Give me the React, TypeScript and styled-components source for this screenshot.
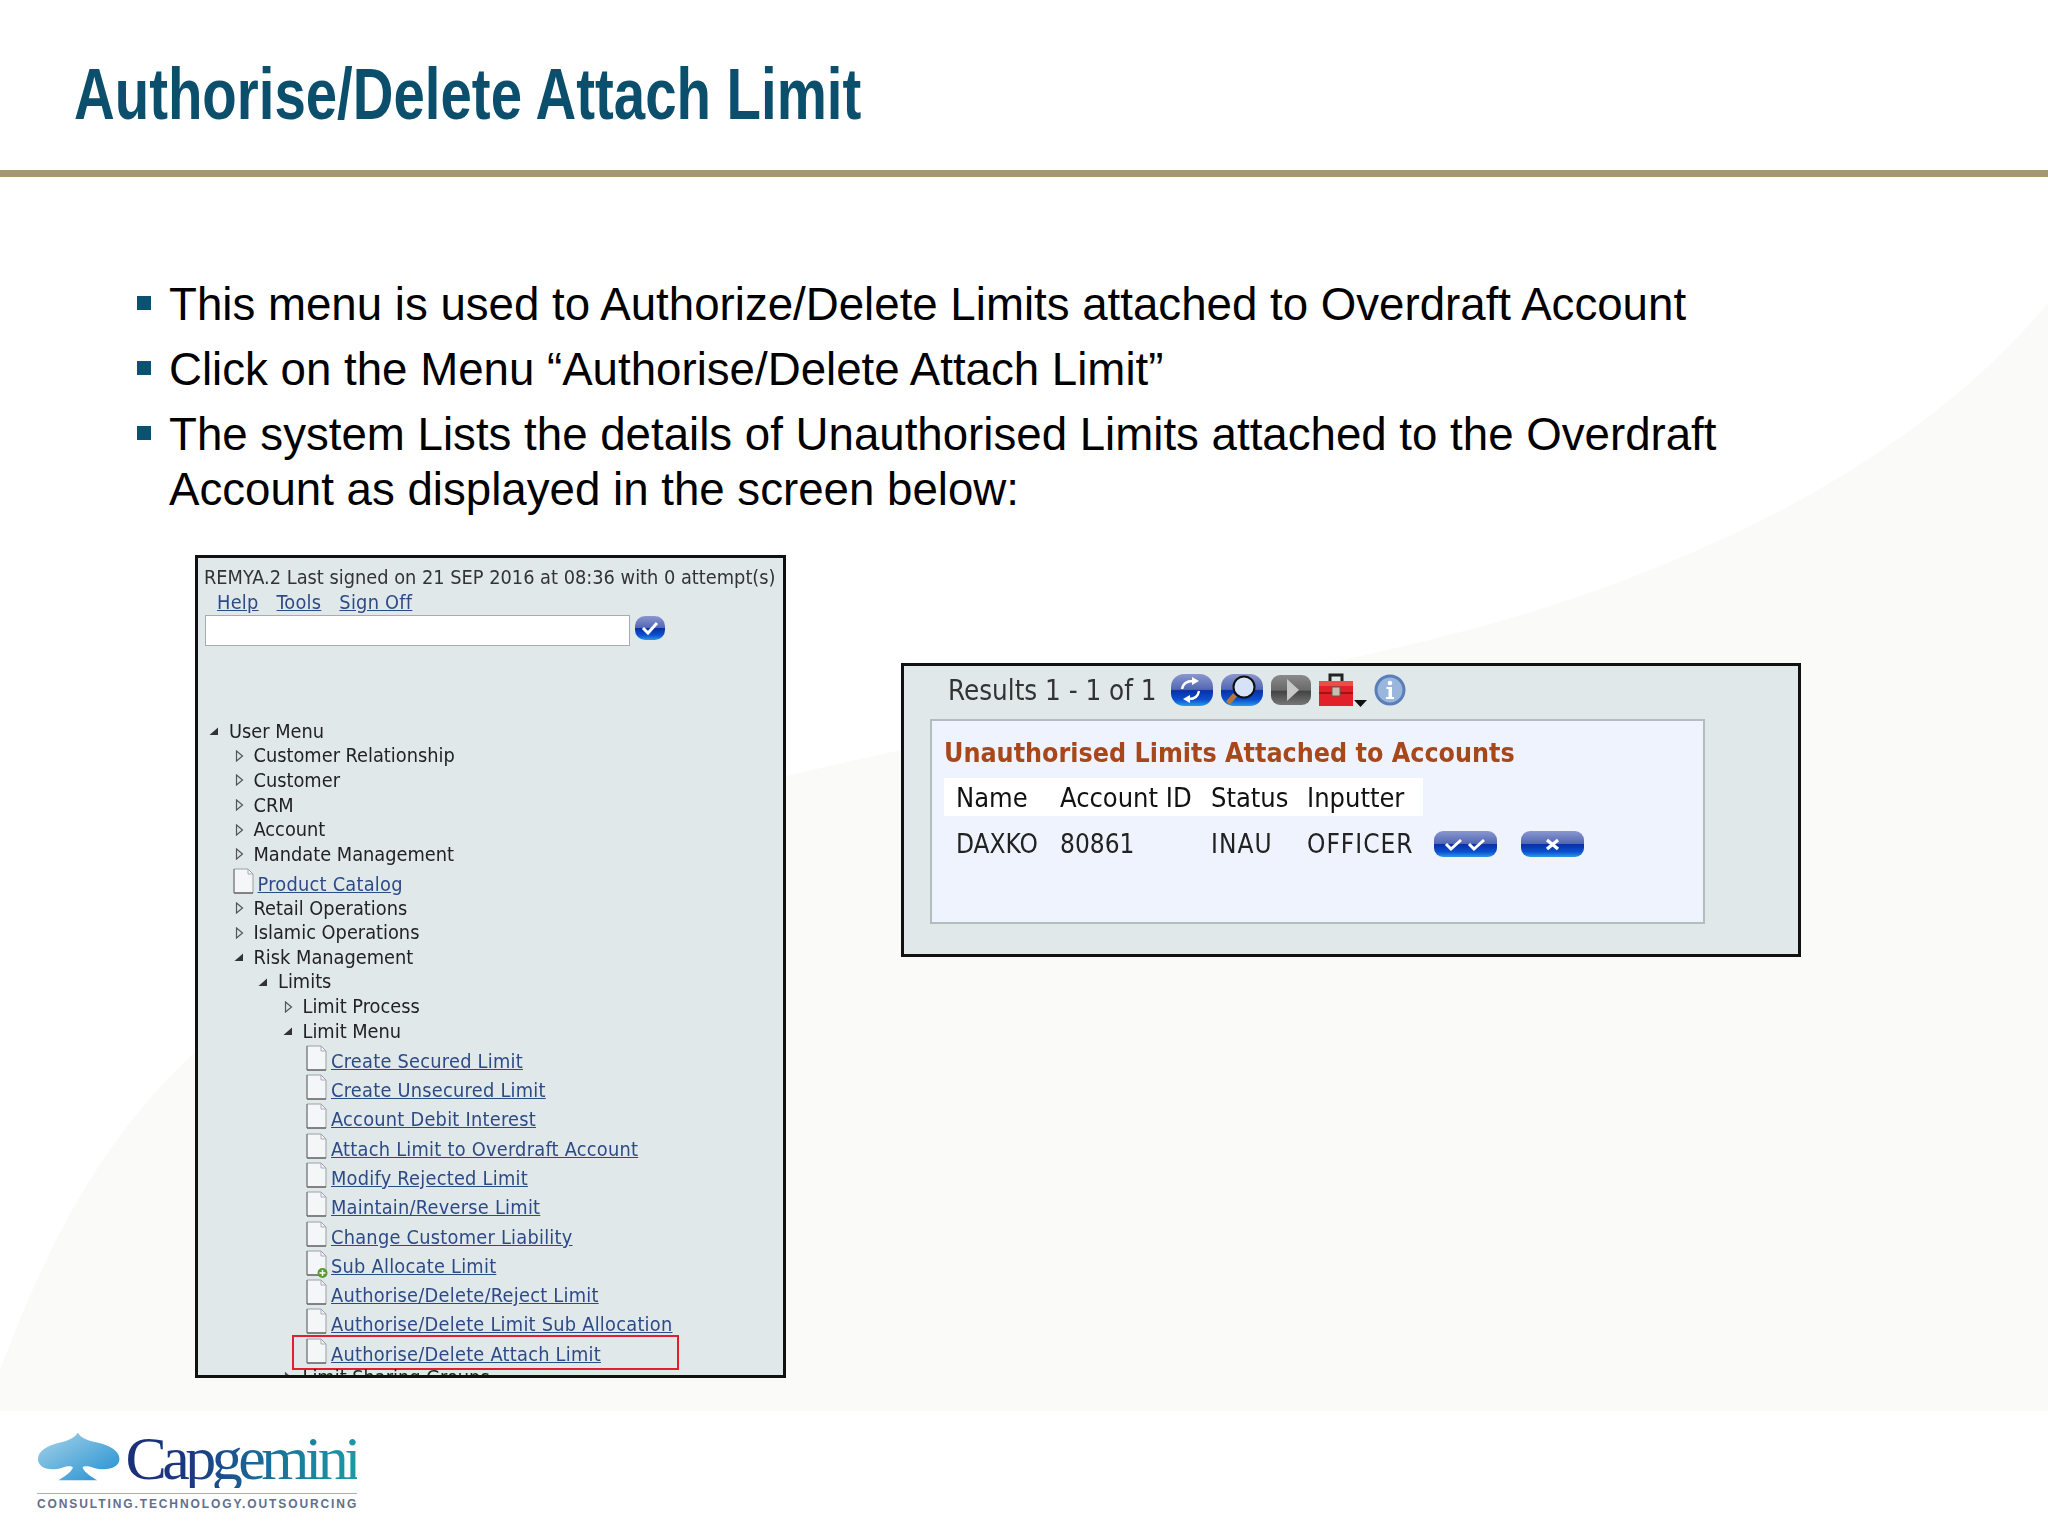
import React from 'react';
import styled, {createGlobalStyle} from 'styled-components';

const GlobalStyle = createGlobalStyle`
    html, body {
        margin: 0;
        padding: 0;
        background: #fff;
    }
`

const menuFont = `"DejaVu Sans", "Noto Sans", sans-serif`

const Arrow = ({open}: { open?: boolean }) => (
    <svg width="12" height="12" viewBox="0 0 12 12">
        {open
            ? <path d="M10 2.5 L10 10 L1.5 10 Z" fill="#333"/>
            : <path d="M3.5 1 L9.5 6 L3.5 11 Z" fill="#dfe5e7" stroke="#555" strokeWidth="1.2"/>}
    </svg>
)

const PageIcon = ({badge}: { badge?: boolean }) => (
    <svg width="22" height="28" viewBox="0 0 22 28">
        <path d="M1 1 H15 L20 6 V25 H1 Z" fill="#f4f6f7" stroke="#9aa0a4" strokeWidth="1"/>
        <path d="M1 25 H20" stroke="#555" strokeWidth="1.2"/>
        <path d="M1 1 V25" stroke="#777" strokeWidth="1"/>
        <path d="M15 1 V6 H20" fill="none" stroke="#aab" strokeWidth="1"/>
        {badge && <>
            <circle cx="16.500" cy="23" r="5" fill="#5a9a2e"/>
            <path d="M16.500 20 V26 M13.500 23 H19.500" stroke="#fff" strokeWidth="1.5"/>
        </>}
    </svg>
)

const BlueDefs = () => (
    <defs>
        <linearGradient id="glossBlue" x1="0" y1="0" x2="0" y2="1">
            <stop offset="0" stopColor="#8a97cf"/>
            <stop offset="0.48" stopColor="#5368b4"/>
            <stop offset="0.52" stopColor="#0a2fa8"/>
            <stop offset="0.8" stopColor="#0b50cf"/>
            <stop offset="1" stopColor="#2a9ae8"/>
        </linearGradient>
        <linearGradient id="glossGrey" x1="0" y1="0" x2="0" y2="1">
            <stop offset="0" stopColor="#8a8a8a"/>
            <stop offset="0.5" stopColor="#6a6a6a"/>
            <stop offset="0.55" stopColor="#444"/>
            <stop offset="1" stopColor="#777"/>
        </linearGradient>
    </defs>
)

const GoIcon = () => (
    <svg width="32" height="26" viewBox="0 0 32 26">
        <rect x="1" y="1" width="30" height="24" rx="10" fill="url(#glossBlue)"/>
        <path d="M9 13 L14 18 L23 8" fill="none" stroke="#fff" strokeWidth="3"/>
    </svg>
)

const RefreshIcon = () => (
    <svg width="44" height="34" viewBox="0 0 44 34">
        <rect x="1" y="1" width="42" height="32" rx="13" fill="url(#glossBlue)"/>
        <path d="M12 16 C13 10 18 8 23 8 M29 18 C28 24 24 26 19 26" fill="none" stroke="#fff" strokeWidth="2.4"/>
        <path d="M22 4 L29 8 L22 12 Z M20 22 L13 26 L20 30 Z" fill="#fff"/>
    </svg>
)

const SearchIcon = () => (
    <svg width="44" height="34" viewBox="0 0 44 34">
        <rect x="1" y="1" width="42" height="32" rx="13" fill="url(#glossBlue)"/>
        <circle cx="24" cy="14" r="10.5" fill="#d5e2f7" stroke="#111" strokeWidth="2"/>
        <path d="M15 22 L8 30" stroke="#b8763a" strokeWidth="5"/>
    </svg>
)

const PlayIcon = () => (
    <svg width="42" height="32" viewBox="0 0 42 32">
        <rect x="1" y="1" width="40" height="30" rx="9" fill="url(#glossGrey)"/>
        <path d="M17 5 L29 16 L17 27 Z" fill="#c6c8c8"/>
    </svg>
)

const ToolboxIcon = () => (
    <svg width="50" height="34" viewBox="0 0 50 34">
        <path d="M12 8 V2 H24 V8" fill="none" stroke="#222" strokeWidth="3"/>
        <rect x="1" y="8" width="34" height="25" fill="#e2202a"/>
        <rect x="1" y="8" width="34" height="5" fill="#f04a4a"/>
        <path d="M1 20 H35" stroke="#8a1010" strokeWidth="1.4"/>
        <rect x="14" y="14" width="8" height="9" fill="#c7bdb0" stroke="#6a5a50"/>
        <path d="M36 27 H49 L42.500 34 Z" fill="#111"/>
    </svg>
)

const InfoIcon = () => (
    <svg width="32" height="32" viewBox="0 0 32 32">
        <circle cx="16" cy="16" r="14" fill="#9ab6dc" stroke="#5a7fb8" strokeWidth="3"/>
        <circle cx="16" cy="9" r="2.300" fill="#fff"/>
        <path d="M12.500 13 H18 V23 H20 V25 H12 V23 H14.500 V15 H12.500 Z" fill="#fff"/>
    </svg>
)

const ApproveIcon = () => (
    <svg width="65" height="28" viewBox="0 0 65 28">
        <rect x="1" y="1" width="63" height="26" rx="9" fill="url(#glossBlue)"/>
        <path d="M13 14 L18 19 L28 10 M36 14 L41 19 L51 10" fill="none" stroke="#fff" strokeWidth="3"/>
    </svg>
)

const RejectIcon = () => (
    <svg width="65" height="28" viewBox="0 0 65 28">
        <rect x="1" y="1" width="63" height="26" rx="9" fill="url(#glossBlue)"/>
        <path d="M27 10 L38 19 M38 10 L27 19" fill="none" stroke="#fff" strokeWidth="3.400"/>
    </svg>
)

const menuRows: {label: string, depth: number, kind: 'open' | 'closed' | 'leaf', badge?: boolean, marked?: boolean}[] = [
    {label: 'User Menu', depth: 0, kind: 'open'},
    {label: 'Customer Relationship', depth: 1, kind: 'closed'},
    {label: 'Customer', depth: 1, kind: 'closed'},
    {label: 'CRM', depth: 1, kind: 'closed'},
    {label: 'Account', depth: 1, kind: 'closed'},
    {label: 'Mandate Management', depth: 1, kind: 'closed'},
    {label: 'Product Catalog', depth: 1, kind: 'leaf'},
    {label: 'Retail Operations', depth: 1, kind: 'closed'},
    {label: 'Islamic Operations', depth: 1, kind: 'closed'},
    {label: 'Risk Management', depth: 1, kind: 'open'},
    {label: 'Limits', depth: 2, kind: 'open'},
    {label: 'Limit Process', depth: 3, kind: 'closed'},
    {label: 'Limit Menu', depth: 3, kind: 'open'},
    {label: 'Create Secured Limit', depth: 4, kind: 'leaf'},
    {label: 'Create Unsecured Limit', depth: 4, kind: 'leaf'},
    {label: 'Account Debit Interest', depth: 4, kind: 'leaf'},
    {label: 'Attach Limit to Overdraft Account', depth: 4, kind: 'leaf'},
    {label: 'Modify Rejected Limit', depth: 4, kind: 'leaf'},
    {label: 'Maintain/Reverse Limit', depth: 4, kind: 'leaf'},
    {label: 'Change Customer Liability', depth: 4, kind: 'leaf'},
    {label: 'Sub Allocate Limit', depth: 4, kind: 'leaf', badge: true},
    {label: 'Authorise/Delete/Reject Limit', depth: 4, kind: 'leaf'},
    {label: 'Authorise/Delete Limit Sub Allocation', depth: 4, kind: 'leaf'},
    {label: 'Authorise/Delete Attach Limit', depth: 4, kind: 'leaf', marked: true},
    {label: 'Limit Sharing Groups', depth: 3, kind: 'closed'},
]

export default function App() {
    return (
        <Page>
            <GlobalStyle/>
            <Swoosh viewBox="0 0 2048 1536" aria-hidden="true">
                <path d="M0 1370 C60 1210 130 1090 260 1000 C420 890 600 820 786 776 C1000 725 1220 690 1400 647 C1650 590 1900 480 2048 303 V1536 H0 Z"
                      fill="#fafaf8"/>
            </Swoosh>
            <Header>
                <Title>Authorise/Delete Attach Limit</Title>
            </Header>
            <Rule/>
            <Bullets>
                <Bullet>This menu is used to Authorize/Delete Limits attached to Overdraft Account</Bullet>
                <Bullet>Click on the Menu “Authorise/Delete Attach Limit”</Bullet>
                <Bullet>The system Lists the details of Unauthorised Limits attached to the Overdraft Account as displayed in the screen below:</Bullet>
            </Bullets>
            <Figures>
                <MenuShot>
                    <svg width="0" height="0" style={{position: 'absolute'}}><BlueDefs/></svg>
                    <SignedLine>REMYA.2 Last signed on 21 SEP 2016 at 08:36 with 0 attempt(s)</SignedLine>
                    <TopLinks>
                        <MenuLink>Help</MenuLink>
                        <MenuLink>Tools</MenuLink>
                        <MenuLink>Sign Off</MenuLink>
                    </TopLinks>
                    <CommandRow>
                        <CommandInput/>
                        <GoIcon/>
                    </CommandRow>
                    <Tree>
                        {menuRows.map(row => (
                            <TreeRow key={row.label} $depth={row.depth} $leaf={row.kind === 'leaf'} $marked={row.marked}>
                                {row.kind === 'leaf'
                                    ? <PageIcon badge={row.badge}/>
                                    : <Arrow open={row.kind === 'open'}/>}
                                {row.kind === 'leaf' ? <MenuLink>{row.label}</MenuLink> : <span>{row.label}</span>}
                            </TreeRow>
                        ))}
                    </Tree>
                </MenuShot>
                <ResultShot>
                    <ResultBar>
                        <ResultCount>Results 1 - 1 of 1</ResultCount>
                        <RefreshIcon/>
                        <SearchIcon/>
                        <PlayIcon/>
                        <ToolboxIcon/>
                        <InfoIcon/>
                    </ResultBar>
                    <ResultCard>
                        <CardTitle>Unauthorised Limits Attached to Accounts</CardTitle>
                        <HeadRow>
                            <NameCell>Name</NameCell>
                            <AccountCell>Account ID</AccountCell>
                            <StatusCell>Status</StatusCell>
                            <InputterCell>Inputter</InputterCell>
                        </HeadRow>
                        <DataRow>
                            <NameCell>DAXKO</NameCell>
                            <AccountCell>80861</AccountCell>
                            <StatusCell $spaced>INAU</StatusCell>
                            <InputterCell $spaced>OFFICER</InputterCell>
                            <RowActions>
                                <ApproveIcon/>
                                <RejectIcon/>
                            </RowActions>
                        </DataRow>
                    </ResultCard>
                </ResultShot>
            </Figures>
            <Footer>
                <Logo>
                    <LogoTop>
                        <svg width="86" height="52" viewBox="0 0 86 52">
                            <defs>
                                <linearGradient id="spade" x1="0" y1="0" x2="1" y2="1">
                                    <stop offset="0" stopColor="#a9d3ea"/>
                                    <stop offset="1" stopColor="#1f8fcf"/>
                                </linearGradient>
                            </defs>
                            <path d="M42 1 C46 7 52 9 62 11 C76 14 85 20 85 28 C85 37 72 41 58 37 C52 35 48 35 47 37 C50 43 56 46 62 50 H22 C28 46 34 43 37 37 C36 35 32 35 26 37 C12 41 1 37 1 28 C1 20 10 14 24 11 C32 9 38 7 42 1 Z"
                                  fill="url(#spade)"/>
                        </svg>
                        <Wordmark>Capgemini</Wordmark>
                    </LogoTop>
                    <Tagline>CONSULTING.TECHNOLOGY.OUTSOURCING</Tagline>
                </Logo>
            </Footer>
        </Page>
    );
}

const Page = styled.div`
    position: relative;
    width: 2048px;
    height: 1536px;
    overflow: hidden;
    display: flex;
    flex-direction: column;
    font-family: "Liberation Sans", Arial, sans-serif;
    background: #fff;
`
const Swoosh = styled.svg`
    position: absolute;
    left: 0;
    top: 0;
    width: 2048px;
    height: 1536px;
`
const Header = styled.header`
    position: relative;
    height: 170px;
    padding: 18px 0 0 74px;
    display: flex;
    align-items: center;
    box-sizing: border-box;
`
const Title = styled.h1`
    margin: 0;
    font-size: 72px;
    font-weight: 700;
    line-height: 1;
    color: #0b4f6c;
    white-space: nowrap;
    transform: scaleX(0.783);
    transform-origin: left center;
`
const Rule = styled.div`
    position: relative;
    height: 7px;
    background: #a5986f;
`
const Bullets = styled.ul`
    position: relative;
    list-style: none;
    margin: 0;
    padding: 100px 0 0 169px;
    width: 1770px;
    height: 378px;
    box-sizing: border-box;
    font-size: 45.650px;
    line-height: 55px;
    color: #000;
`
const Bullet = styled.li`
    position: relative;
    margin-bottom: 10px;

    &::before {
        content: "";
        position: absolute;
        left: -32px;
        top: 19px;
        width: 14px;
        height: 14px;
        background: #0b5270;
    }
`
const Figures = styled.div`
    position: relative;
    display: flex;
    align-items: flex-start;
    gap: 115px;
    padding-left: 195px;
`
const MenuShot = styled.div`
    width: 591px;
    height: 823px;
    box-sizing: border-box;
    border: 3px solid #111;
    background: #e1e8ea;
    padding: 8px 0 0 6px;
    overflow: hidden;
    font-family: ${menuFont};
    font-size: 19.800px;
    color: #222;
    filter: blur(0.4px);
`
const SignedLine = styled.div`
    line-height: 24px;
    white-space: nowrap;
    color: #333;
    font-stretch: condensed;
`
const MenuLink = styled.a`
    color: #2c4a86;
    text-decoration: underline;
    white-space: nowrap;
    font-stretch: condensed;
    letter-spacing: 0.250px;
`
const TopLinks = styled.div`
    display: flex;
    gap: 18px;
    padding-left: 13px;
    line-height: 25px;
`
const CommandRow = styled.div`
    display: flex;
    align-items: flex-start;
    gap: 4px;
    padding-left: 1px;
`
const CommandInput = styled.div`
    width: 425px;
    height: 31px;
    box-sizing: border-box;
    background: #fff;
    border: 1px solid #a8acae;
`
const Tree = styled.div`
    margin-top: 73px;
    padding-left: 1px;
    font-stretch: condensed;
`
const TreeRow = styled.div<{ $depth: number, $leaf?: boolean, $marked?: boolean }>`
    position: relative;
    display: flex;
    align-items: ${p => p.$leaf ? 'flex-end' : 'center'};
    gap: ${p => p.$leaf ? '3px' : '9px'};
    height: ${p => p.$leaf ? '29.300px' : '24.600px'};
    padding-left: ${p => p.$depth * 24.500 + 3}px;
    white-space: nowrap;
    color: #222;

    ${p => p.$marked && `
        &::after {
            content: "";
            position: absolute;
            left: 87px;
            top: -1px;
            width: 387px;
            height: 35px;
            box-sizing: border-box;
            border: 2px solid #e0202e;
        }
    `}
`
const ResultShot = styled.div`
    width: 900px;
    height: 294px;
    margin-top: 108px;
    box-sizing: border-box;
    border: 3px solid #111;
    background: #e1e8ea;
    padding: 0 0 0 26px;
    font-family: ${menuFont};
    font-stretch: condensed;
    color: #222;
    filter: blur(0.4px);
`
const ResultBar = styled.div`
    display: flex;
    align-items: center;
    gap: 6px;
    height: 47px;
    margin-bottom: 6px;
    padding-left: 18px;
`
const ResultCount = styled.span`
    font-size: 27.500px;
    color: #333;
    margin-right: 8px;
    white-space: nowrap;
`
const ResultCard = styled.div`
    width: 775px;
    height: 205px;
    box-sizing: border-box;
    background: #eff3fd;
    border: 2px solid #b5bcc0;
    padding: 15px 12px 0;
`
const CardTitle = styled.div`
    font-size: 26.600px;
    font-weight: 700;
    color: #a8471a;
    line-height: 34px;
    white-space: nowrap;
`
const HeadRow = styled.div`
    display: flex;
    align-items: center;
    width: 479px;
    height: 38px;
    margin-top: 8px;
    background: #fff;
    font-size: 27px;
    color: #111;
`
const DataRow = styled.div`
    display: flex;
    align-items: center;
    height: 56px;
    font-size: 26px;
    color: #222;
`
const NameCell = styled.span`
    width: 116px;
    padding-left: 12px;
    box-sizing: border-box;
    white-space: nowrap;
`
const AccountCell = styled.span`
    width: 151px;
    white-space: nowrap;
`
const StatusCell = styled.span<{ $spaced?: boolean }>`
    width: 96px;
    white-space: nowrap;
    letter-spacing: ${p => p.$spaced ? '1px' : '0'};
`
const InputterCell = styled.span<{ $spaced?: boolean }>`
    width: 116px;
    white-space: nowrap;
    letter-spacing: ${p => p.$spaced ? '1px' : '0'};
`
const RowActions = styled.span`
    display: flex;
    gap: 22px;
    margin-left: 10px;
`
const Footer = styled.footer`
    position: absolute;
    left: 0;
    right: 0;
    bottom: 0;
    height: 125px;
    background: #fff;
    padding: 20px 0 0 37px;
    box-sizing: border-box;
`
const Logo = styled.div`
    display: flex;
    flex-direction: column;
    width: 320px;
`
const LogoTop = styled.div`
    display: flex;
    align-items: flex-start;
    gap: 5px;
    height: 62px;
    border-bottom: 1px solid #8fb7d0;
`
const Wordmark = styled.span`
    margin-top: -3px;
    font-family: "Liberation Serif", "Times New Roman", serif;
    font-size: 62px;
    line-height: 60px;
    letter-spacing: -4.500px;
    background: linear-gradient(90deg, #1b2f78 0%, #1b3a80 30%, #1a6a98 58%, #1a9aa5 100%);
    -webkit-background-clip: text;
    background-clip: text;
    color: transparent;
`
const Tagline = styled.div`
    margin-top: 3px;
    font-size: 12px;
    line-height: 14px;
    font-weight: 700;
    letter-spacing: 1.900px;
    color: #5f6f8e;
    white-space: nowrap;
`
